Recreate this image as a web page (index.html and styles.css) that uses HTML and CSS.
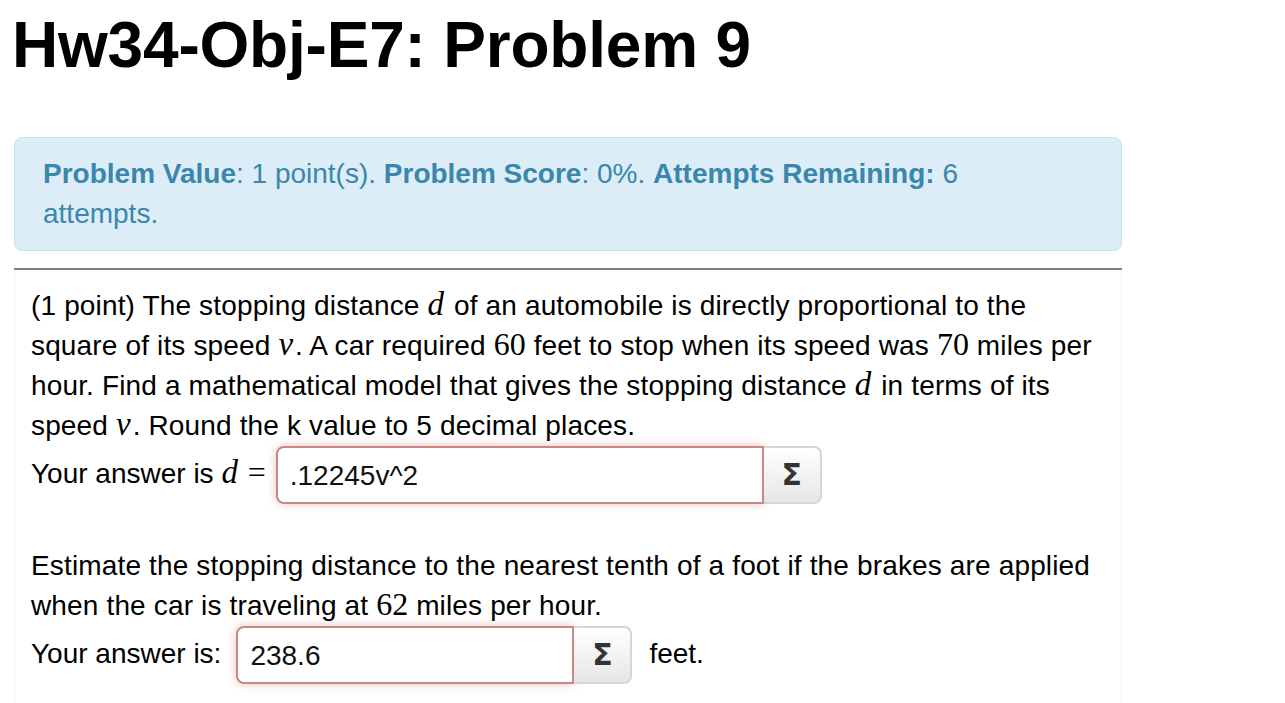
FILE: index.html
```html
<!DOCTYPE html>
<html>
<head>
<meta charset="utf-8">
<link rel="stylesheet" href="styles.css">
</head>
<body>
<div class="page">
  <h1 class="title">Hw34-Obj-E7: Problem 9</h1>
  <div class="alert">
    <strong>Problem Value</strong>: 1 point(s). <strong>Problem Score</strong>: 0%. <strong>Attempts Remaining:</strong> 6 attempts.
  </div>
  <hr class="rule">
  <div class="problem">
    <p class="para">(1 point) The stopping distance <span class="mi">d</span> of an automobile is directly proportional to the square of its speed <span class="mi">v</span>. A car required <span class="mn">60</span> feet to stop when its speed was <span class="mn">70</span> miles per hour. Find a mathematical model that gives the stopping distance <span class="mi">d</span> in terms of its speed <span class="mi">v</span>. Round the k value to 5 decimal places.</p>
    <div class="answer-row">
      <span class="label">Your answer is <span class="mi">d</span> <span class="mo">=</span></span>
      <div class="answer-group">
        <input class="answer wide" type="text" value=".12245v^2">
        <span class="sigma">&Sigma;</span>
      </div>
    </div>
    <p class="para second">Estimate the stopping distance to the nearest tenth of a foot if the brakes are applied when the car is traveling at <span class="mn">62</span> miles per hour.</p>
    <div class="answer-row">
      <span class="label wide-gap">Your answer is:</span>
      <div class="answer-group">
        <input class="answer narrow" type="text" value="238.6">
        <span class="sigma">&Sigma;</span>
      </div>
      <span class="unit">feet.</span>
    </div>
  </div>
</div>
</body>
</html>
```

FILE: styles.css
```css
html, body {
  margin: 0;
  padding: 0;
  background: #ffffff;
}
body {
  font-family: "Liberation Sans", Arial, Helvetica, sans-serif;
  color: #000;
  overflow: hidden;
}
.page {
  width: 1108px;
  margin-left: 14px;
}
.title {
  font-size: 64px;
  font-weight: bold;
  line-height: 70px;
  margin: 10px 0 57px -2px;
  letter-spacing: -0.2px;
}
.alert {
  background: #dcedf7;
  border: 1px solid #bce8f1;
  border-radius: 8px;
  color: #3a87ad;
  font-size: 28px;
  line-height: 40px;
  padding: 16px 70px 16px 28px;
}
.alert strong {
  font-weight: bold;
}
.rule {
  margin: 17px 0 0 0;
  border: 0;
  border-top: 2px solid #808080;
  height: 0;
}
.problem {
  border-left: 1px solid #f2f2f2;
  border-right: 1px solid #f2f2f2;
  padding: 16px 16px 40px 16px;
  font-size: 28px;
  line-height: 40px;
  height: 600px;
}
.para {
  margin: 0;
  letter-spacing: 0.15px;
}
.para.second {
  margin-top: 42px;
}
.mi {
  font-family: "Liberation Serif", "Times New Roman", serif;
  font-style: italic;
  font-size: 33px;
  line-height: 0;
  letter-spacing: 0;
  padding-right: 2px;
}
.mn, .mo {
  font-family: "Liberation Serif", "Times New Roman", serif;
  font-size: 32px;
  line-height: 0;
  letter-spacing: 0;
}
.answer-row {
  display: flex;
  align-items: center;
  height: 58px;
}
.label {
  margin-right: 10px;
  white-space: nowrap;
  position: relative;
  top: -1px;
}
.label.wide-gap {
  margin-right: 15px;
}
.answer-group {
  display: flex;
  height: 58px;
}
.answer {
  box-sizing: border-box;
  height: 58px;
  border: 2px solid #c98786;
  border-radius: 8px 0 0 8px;
  box-shadow: 0 0 10px rgba(185, 74, 72, 0.35);
  font-family: "Liberation Sans", Arial, sans-serif;
  font-size: 28px;
  color: #111;
  padding: 2px 12px 0 12px;
  outline: none;
  background: #fff;
}
.answer.wide {
  width: 488px;
}
.answer.narrow {
  width: 338px;
}
.sigma {
  box-sizing: border-box;
  width: 58px;
  height: 58px;
  display: flex;
  align-items: center;
  justify-content: center;
  border: 2px solid #d6d6d6;
  border-left: 0;
  border-radius: 0 8px 8px 0;
  background: linear-gradient(#ffffff, #e6e6e6);
  color: #333;
  font-family: "DejaVu Sans", sans-serif;
  font-weight: bold;
  font-size: 30px;
}
.unit {
  margin-left: 17px;
  position: relative;
  top: -1px;
}
```
